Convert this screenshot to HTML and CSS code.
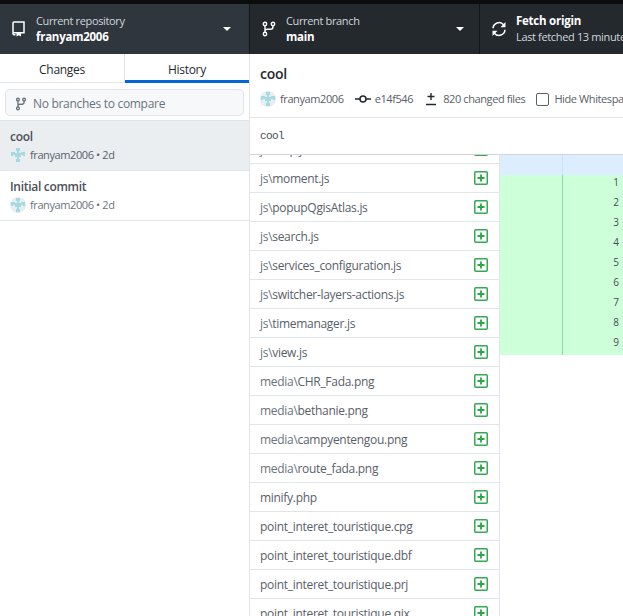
FILE: index.html
```html
<!DOCTYPE html>
<html lang="en">
<head>
<meta charset="utf-8">
<title>GitHub Desktop</title>
<link rel="stylesheet" href="styles.css">
</head>
<body>
<svg class="defs" width="0" height="0" aria-hidden="true">
  <symbol id="avatar" viewBox="0 0 16 16">
    <circle cx="8" cy="8" r="8" fill="#e6eef0"/>
    <path fill="#a6d9e2" d="M6 1h4v3H9v2h2V5h4v4h-2V8h-2v2H9v2h1v3H6v-3h1v-2H5V8H3v1H1V5h4v1h2V4H6z"/>
  </symbol>
  <symbol id="added" viewBox="0 0 14 14">
    <rect x="0.750" y="0.750" width="12.500" height="12.500" rx="1" fill="none" stroke="#34a853" stroke-width="1.500"/>
    <path d="M7 3.500v7M3.500 7h7" stroke="#28a745" stroke-width="1.800" fill="none"/>
  </symbol>
</svg>
<header class="toolbar">
  <div class="tool tool-repo">
    <svg class="tool-icon icon-repo" width="13" height="16" viewBox="0 0 13 16"><path fill="none" stroke="#fff" stroke-width="1.500" d="M1 12.800V2c0-.6.400-1 1-1h10v10.800H2c-.6 0-1 .400-1 1 0 .600.400 1 1 1h1.500"/><path fill="#fff" d="M4.500 11h4.500v4.500l-2.250-1.300-2.250 1.300z"/></svg>
    <div class="tool-text"><span class="tool-label">Current repository</span><strong>franyam2006</strong></div>
    <span class="caret"></span>
  </div>
  <div class="tool tool-branch">
    <svg class="tool-icon" width="14" height="16" viewBox="0 0 14 16"><g fill="none" stroke="#fff" stroke-width="1.400"><circle cx="3" cy="3" r="1.700"/><circle cx="3" cy="13" r="1.700"/><circle cx="11" cy="3" r="1.700"/><path d="M3 4.700v6.600M11 4.700V6c0 1.500-1 2.300-2.500 2.300H5.500C4 8.300 3 9 3 10"/></g></svg>
    <div class="tool-text"><span class="tool-label">Current branch</span><strong>main</strong></div>
    <span class="caret"></span>
  </div>
  <div class="tool tool-fetch">
    <svg class="tool-icon" width="16" height="16" viewBox="0 0 16 16"><g fill="none" stroke="#fff" stroke-width="1.500"><path d="M2 7.200A6 6 0 0 1 12.600 3.800"/><path d="M14 8.800A6 6 0 0 1 3.400 12.200"/></g><path fill="#fff" d="M14.500 1v5.200H9.500zM1.500 15V9.800h5z"/></svg>
    <div class="tool-text"><strong>Fetch origin</strong><span class="tool-label">Last fetched 13 minutes ago</span></div>
  </div>
</header>
<main class="app">
  <aside class="sidebar">
    <nav class="tabs">
      <div class="tab">Changes</div>
      <div class="tab tab-active">History</div>
    </nav>
    <div class="filter-wrap">
      <div class="filter">
        <svg width="12" height="14" viewBox="0 0 12 16"><g fill="none" stroke="#6a737d" stroke-width="1.500"><circle cx="2.500" cy="3" r="1.600"/><circle cx="2.500" cy="13" r="1.600"/><circle cx="9.500" cy="3" r="1.600"/><path d="M2.500 4.600v6.800M9.500 4.600V6c0 1.500-1 2.300-2.500 2.300H5C3.500 8.300 2.500 9 2.500 10"/></g></svg>
        <span>No branches to compare</span>
      </div>
    </div>
    <ul class="commits">
      <li class="commit commit-selected">
        <div class="commit-title">cool</div>
        <div class="commit-meta"><svg class="avatar"><use href="#avatar"/></svg><span>franyam2006 • 2d</span></div>
      </li>
      <li class="commit">
        <div class="commit-title">Initial commit</div>
        <div class="commit-meta"><svg class="avatar"><use href="#avatar"/></svg><span>franyam2006 • 2d</span></div>
      </li>
    </ul>
  </aside>
  <section class="detail">
    <div class="summary">
      <h1>cool</h1>
      <div class="meta">
        <svg class="avatar"><use href="#avatar"/></svg>
        <span class="meta-author">franyam2006</span>
        <svg class="meta-icon icon-sha" width="16" height="10" viewBox="0 0 16 10"><circle cx="8" cy="5" r="3" fill="none" stroke="#24292e" stroke-width="1.500"/><path d="M0 5h5M11 5h5" stroke="#24292e" stroke-width="1.500"/></svg>
        <span class="meta-sha">e14f546</span>
        <svg class="meta-icon icon-diff" width="10" height="14" viewBox="0 0 10 14"><path d="M5 1v7M1.500 4.500h7M0 12.500h10" stroke="#24292e" stroke-width="1.400" fill="none"/></svg>
        <span class="meta-files">820 changed files</span>
        <span class="check"></span>
        <span class="meta-hide">Hide Whitespace</span>
      </div>
    </div>
    <div class="message">cool</div>
    <div class="panes">
      <div class="files">
        <ul class="file-list">
          <li class="file"><span><i>js\</i>map.js</span><svg class="added"><use href="#added"/></svg></li>
          <li class="file"><span><i>js\</i>moment.js</span><svg class="added"><use href="#added"/></svg></li>
          <li class="file"><span><i>js\</i>popupQgisAtlas.js</span><svg class="added"><use href="#added"/></svg></li>
          <li class="file"><span><i>js\</i>search.js</span><svg class="added"><use href="#added"/></svg></li>
          <li class="file"><span><i>js\</i>services_configuration.js</span><svg class="added"><use href="#added"/></svg></li>
          <li class="file"><span><i>js\</i>switcher-layers-actions.js</span><svg class="added"><use href="#added"/></svg></li>
          <li class="file"><span><i>js\</i>timemanager.js</span><svg class="added"><use href="#added"/></svg></li>
          <li class="file"><span><i>js\</i>view.js</span><svg class="added"><use href="#added"/></svg></li>
          <li class="file"><span><i>media\</i>CHR_Fada.png</span><svg class="added"><use href="#added"/></svg></li>
          <li class="file"><span><i>media\</i>bethanie.png</span><svg class="added"><use href="#added"/></svg></li>
          <li class="file"><span><i>media\</i>campyentengou.png</span><svg class="added"><use href="#added"/></svg></li>
          <li class="file"><span><i>media\</i>route_fada.png</span><svg class="added"><use href="#added"/></svg></li>
          <li class="file"><span>minify.php</span><svg class="added"><use href="#added"/></svg></li>
          <li class="file"><span>point_interet_touristique.cpg</span><svg class="added"><use href="#added"/></svg></li>
          <li class="file"><span>point_interet_touristique.dbf</span><svg class="added"><use href="#added"/></svg></li>
          <li class="file"><span>point_interet_touristique.prj</span><svg class="added"><use href="#added"/></svg></li>
          <li class="file"><span>point_interet_touristique.qix</span><svg class="added"><use href="#added"/></svg></li>
        </ul>
      </div>
      <div class="diff">
        <div class="hunk"><div class="gutter-a"></div><div class="gutter-b"></div></div>
        <div class="line"><div class="gutter-a"></div><div class="gutter-b">1</div></div>
        <div class="line"><div class="gutter-a"></div><div class="gutter-b">2</div></div>
        <div class="line"><div class="gutter-a"></div><div class="gutter-b">3</div></div>
        <div class="line"><div class="gutter-a"></div><div class="gutter-b">4</div></div>
        <div class="line"><div class="gutter-a"></div><div class="gutter-b">5</div></div>
        <div class="line"><div class="gutter-a"></div><div class="gutter-b">6</div></div>
        <div class="line"><div class="gutter-a"></div><div class="gutter-b">7</div></div>
        <div class="line"><div class="gutter-a"></div><div class="gutter-b">8</div></div>
        <div class="line"><div class="gutter-a"></div><div class="gutter-b">9</div></div>
      </div>
    </div>
  </section>
</main>
</body>
</html>
```

FILE: styles.css
```css
* { box-sizing: border-box; }
html, body { margin: 0; height: 100%; overflow: hidden; }
body {
  display: flex;
  flex-direction: column;
  width: 623px;
  height: 616px;
  background: #fff;
  color: #24292e;
  font-family: "Open Sans", "Noto Sans", sans-serif;
  font-size: 12px;
  letter-spacing: -0.3px;
}
.defs { position: absolute; }
.toolbar {
  display: flex;
  flex: none;
  height: 54px;
  border-top: 4px solid #0b0c0e;
  background: #24292e;
  color: #fff;
  overflow: hidden;
}
.tool {
  display: flex;
  flex: none;
  align-items: center;
  height: 50px;
  border-right: 1px solid #141619;
}
.tool-repo { width: 250px; padding: 0 18px 0 12px; background: #2f363d; }
.tool-branch { width: 230px; padding: 0 15px 0 12px; }
.tool-fetch { flex: 1; padding: 0 0 0 11px; border-right: 0; }
.tool-icon { flex: none; }
.tool-text {
  display: flex;
  flex: 1;
  flex-direction: column;
  margin-left: 10px;
  white-space: nowrap;
  line-height: 16px;
}
.tool-repo .tool-text { margin-left: 11px; }
.tool-fetch .tool-text { margin-left: 9px; }
.tool-label { font-size: 11px; letter-spacing: -0.35px; color: #d1d5da; }
.tool-text strong { font-size: 11.500px; font-weight: 700; letter-spacing: -0.25px; }
.caret {
  width: 0;
  height: 0;
  border-top: 4px solid #fff;
  border-left: 4px solid transparent;
  border-right: 4px solid transparent;
}
.app { display: flex; flex: 1; min-height: 0; }
.sidebar {
  display: flex;
  flex: none;
  flex-direction: column;
  width: 250px;
  border-right: 1px solid #e1e4e8;
}
.tabs { display: flex; height: 29px; border-bottom: 1px solid #e1e4e8; }
.tab {
  flex: 1;
  padding-top: 7px;
  text-align: center;
  line-height: 18px;
  color: #24292e;
}
.tab:first-child { border-right: 1px solid #e1e4e8; }
.tab-active { border-bottom: 3px solid #0366d6; height: 29px; }
.filter-wrap { height: 38px; padding: 6px 5px 4px; border-bottom: 1px solid #e1e4e8; }
.filter {
  display: flex;
  align-items: center;
  gap: 6px;
  height: 27px;
  padding: 2px 0 0 9px;
  border: 1px solid #e1e4e8;
  border-radius: 5px;
  background: #f6f8fa;
  color: #6a737d;
}
.commits { margin: 0; padding: 0; list-style: none; }
.commit { height: 50px; padding: 7px 10px 0; border-bottom: 1px solid #e1e4e8; color: #6a737d; }
.commit-selected { background: #ebeef1; color: #586069; }
.commit-title { font-weight: 600; line-height: 17px; color: #4a5057; }
.commit-meta { display: flex; align-items: center; gap: 4px; margin-top: 2px; font-size: 11px; letter-spacing: -0.4px; line-height: 16px; }
.avatar { flex: none; width: 16px; height: 16px; }
.detail { display: flex; flex: 1; flex-direction: column; min-width: 0; }
.summary { flex: none; height: 64px; padding: 10px 10px 0; border-bottom: 1px solid #e1e4e8; }
.summary h1 { margin: 0; font-size: 14px; font-weight: 600; line-height: 19px; color: #24292e; }
.meta { display: flex; align-items: center; margin-top: 8px; font-size: 11px; letter-spacing: -0.4px; white-space: nowrap; color: #586069; line-height: 16px; }
.meta-author { margin-left: 4px; }
.meta-icon { flex: none; }
.icon-sha { margin: 0 4px 0 11px; }
.icon-diff { margin: 0 7px 0 13px; }
.meta-hide { margin-left: 5px; }
.check {
  flex: none;
  width: 13px;
  height: 13px;
  margin-left: 11px;
  border: 1px solid #586069;
  border-radius: 2px;
}
.message {
  flex: none;
  height: 37px;
  padding: 10px 10px 0;
  border-bottom: 1px solid #d1d5da;
  font-family: "Liberation Mono", monospace;
  font-size: 11px;
  letter-spacing: -0.6px;
  line-height: 17px;
  color: #444d56;
}
.panes { display: flex; flex: 1; min-height: 0; }
.files { flex: none; width: 250px; overflow: hidden; border-right: 1px solid #e1e4e8; }
.file-list { margin: -20px 0 0; padding: 0; list-style: none; }
.file {
  display: flex;
  align-items: center;
  justify-content: space-between;
  height: 29px;
  padding: 0 11px 0 10px;
  border-bottom: 1px solid #e1e4e8;
  color: #586069;
  white-space: nowrap;
}
.file i { font-style: normal; color: #6a737d; }
.added { flex: none; width: 14px; height: 14px; }
.diff { flex: 1; min-width: 0; font-size: 10px; letter-spacing: 0; }
.hunk, .line { display: flex; height: 20px; }
.hunk { background: #dbedff; }
.line { background: #cdffd8; }
.gutter-a { width: 63px; border-right: 1px solid #c8e1ff; }
.line .gutter-a { border-right-color: #80e29a; }
.gutter-b { flex: 1; padding-right: 4px; text-align: right; line-height: 15px; color: #444d56; }
```
